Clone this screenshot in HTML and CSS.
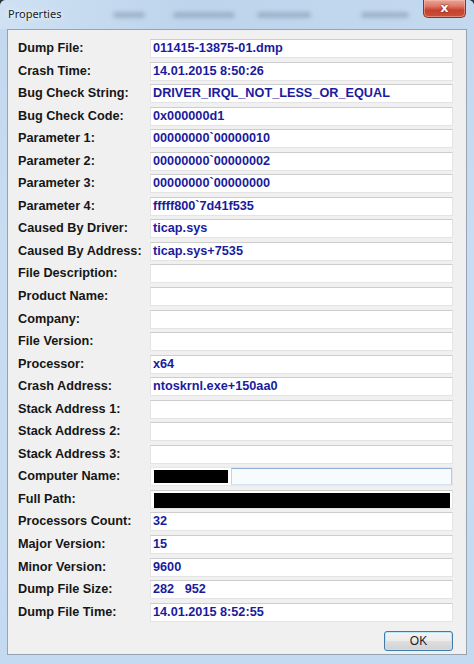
FILE: index.html
```html
<!DOCTYPE html>
<html>
<head>
<meta charset="utf-8">
<link rel="stylesheet" href="styles.css">
</head>
<body>
<div class="window">
  <div class="titlebar">
    <span class="title">Properties</span>
    <div class="ghost g1"></div>
    <div class="ghost g2"></div>
    <div class="ghost g3"></div>
    <div class="ghost g4"></div>
    <div class="close"><span class="x">x</span></div>
  </div>
  <div class="client">
    <div class="grid">
      <div class="label">Dump File:</div><div class="field">011415-13875-01.dmp</div>
      <div class="label">Crash Time:</div><div class="field">14.01.2015 8:50:26</div>
      <div class="label">Bug Check String:</div><div class="field">DRIVER_IRQL_NOT_LESS_OR_EQUAL</div>
      <div class="label">Bug Check Code:</div><div class="field">0x000000d1</div>
      <div class="label">Parameter 1:</div><div class="field">00000000`00000010</div>
      <div class="label">Parameter 2:</div><div class="field">00000000`00000002</div>
      <div class="label">Parameter 3:</div><div class="field">00000000`00000000</div>
      <div class="label">Parameter 4:</div><div class="field">fffff800`7d41f535</div>
      <div class="label">Caused By Driver:</div><div class="field">ticap.sys</div>
      <div class="label">Caused By Address:</div><div class="field">ticap.sys+7535</div>
      <div class="label">File Description:</div><div class="field"></div>
      <div class="label">Product Name:</div><div class="field"></div>
      <div class="label">Company:</div><div class="field"></div>
      <div class="label">File Version:</div><div class="field"></div>
      <div class="label">Processor:</div><div class="field">x64</div>
      <div class="label">Crash Address:</div><div class="field">ntoskrnl.exe+150aa0</div>
      <div class="label">Stack Address 1:</div><div class="field"></div>
      <div class="label">Stack Address 2:</div><div class="field"></div>
      <div class="label">Stack Address 3:</div><div class="field"></div>
      <div class="label">Computer Name:</div>
      <div class="field split">
        <div class="split-a"><div class="redact short"></div></div>
        <div class="split-b"></div>
      </div>
      <div class="label">Full Path:</div><div class="field padded"><div class="redact long"></div></div>
      <div class="label">Processors Count:</div><div class="field">32</div>
      <div class="label">Major Version:</div><div class="field">15</div>
      <div class="label">Minor Version:</div><div class="field">9600</div>
      <div class="label">Dump File Size:</div><div class="field">282&nbsp;&nbsp;&nbsp;952</div>
      <div class="label">Dump File Time:</div><div class="field">14.01.2015 8:52:55</div>
    </div>
    <div class="buttons">
      <button class="ok">OK</button>
    </div>
  </div>
</div>
</body>
</html>
```
FILE: styles.css
```css
html, body {
  margin: 0;
  padding: 0;
  background: #2b3640;
}

.window {
  width: 474px;
  height: 664px;
  box-sizing: border-box;
  display: flex;
  flex-direction: column;
  background: linear-gradient(to bottom, #c2d8ee 0%, #c9ddf1 40%, #c4daf0 100%);
  border-radius: 6px 6px 0 0;
  overflow: hidden;
}

.titlebar {
  height: 29px;
  flex: none;
  display: flex;
  align-items: flex-start;
  padding: 0 8px 0 8px;
  background: linear-gradient(to right, #cfe1f3 0%, #bdd4ec 40%, #c4d9ef 100%);
}

.title {
  font-family: "Noto Sans", "Open Sans", sans-serif;
  font-size: 11px;
  color: #1a1a1a;
  margin-top: 6px;
  line-height: 16px;
  flex: none;
  text-shadow: 0 0 6px #eaf3fb, 0 0 3px #ffffff;
}

.ghost {
  flex: none;
  height: 6px;
  margin-top: 12px;
  background: #8196ab;
  filter: blur(2px);
  opacity: 0.55;
  border-radius: 3px;
}
.g1 { margin-left: 52px; width: 32px; }
.g2 { margin-left: 28px; width: 62px; }
.g3 { margin-left: 22px; width: 54px; }
.g4 { margin-left: 50px; width: 48px; }

.close {
  flex: none;
  margin-left: auto;
  width: 43px;
  height: 18px;
  box-sizing: border-box;
  border: 1px solid #8a3326;
  border-top: none;
  border-radius: 0 0 5px 5px;
  background: linear-gradient(to bottom, #e9a596 0%, #dd7b69 35%, #c8412d 60%, #c9523a 100%);
  box-shadow: inset 0 0 0 1px rgba(255, 200, 190, 0.45);
  display: flex;
  align-items: center;
  justify-content: center;
}

.x {
  font-family: "DejaVu Sans", sans-serif;
  font-weight: bold;
  font-size: 13px;
  line-height: 13px;
  color: #ffffff;
  margin-top: -2px;
  text-shadow: 0 0 2px #6a1a10, 0 0 1px #6a1a10;
}

.client {
  flex: 1;
  margin: 0 7px 9px 7px;
  background: #f0f0f0;
  border: 1px solid #96a3b1;
  display: flex;
  flex-direction: column;
  padding: 9px 13px 0 10px;
}

.grid {
  display: grid;
  grid-template-columns: 132px 303px;
  grid-auto-rows: 19px;
  row-gap: 3.55px;
}

.label {
  font-family: "Liberation Sans", Arial, sans-serif;
  font-weight: bold;
  font-size: 12.7px;
  line-height: 19px;
  color: #161616;
  white-space: nowrap;
}

.field {
  box-sizing: border-box;
  background: #ffffff;
  border: 1px solid #e4e4e4;
  border-top-color: #cdcdcd;
  font-family: "Liberation Sans", Arial, sans-serif;
  font-weight: bold;
  font-size: 12.7px;
  line-height: 17px;
  color: #1b1b9e;
  padding-left: 2px;
  white-space: nowrap;
  overflow: hidden;
}

.field.padded {
  padding: 2px 2px 0 3px;
}

.redact {
  background: #000000;
}

.redact.long {
  height: 16px;
}

.field.split {
  display: flex;
  padding: 0;
  border-color: #e6e6e6;
}

.split-a {
  width: 80px;
  padding: 2px 0 0 3px;
  box-sizing: border-box;
}

.redact.short {
  width: 74px;
  height: 13px;
}

.split-b {
  flex: 1;
  border-top: 1px solid #8fb0d2;
  border-left: 1px solid #c3d5e8;
  border-right: 1px solid #b5cbe2;
  border-bottom: 1px solid #d6e3f0;
  background: #f8fbfe;
}

.buttons {
  display: flex;
  justify-content: flex-end;
  margin-top: 9px;
}

.ok {
  width: 69px;
  height: 20px;
  box-sizing: border-box;
  border: 1px solid #3d7bad;
  border-radius: 3px;
  background: linear-gradient(to bottom, #f4f4f4 0%, #ececec 48%, #dedede 52%, #d1d1d1 100%);
  box-shadow: inset 0 0 0 1px #bfe3f7;
  font-family: "Liberation Sans", Arial, sans-serif;
  font-size: 12px;
  color: #1e1e1e;
  padding: 0;
  line-height: 16px;
}
```
